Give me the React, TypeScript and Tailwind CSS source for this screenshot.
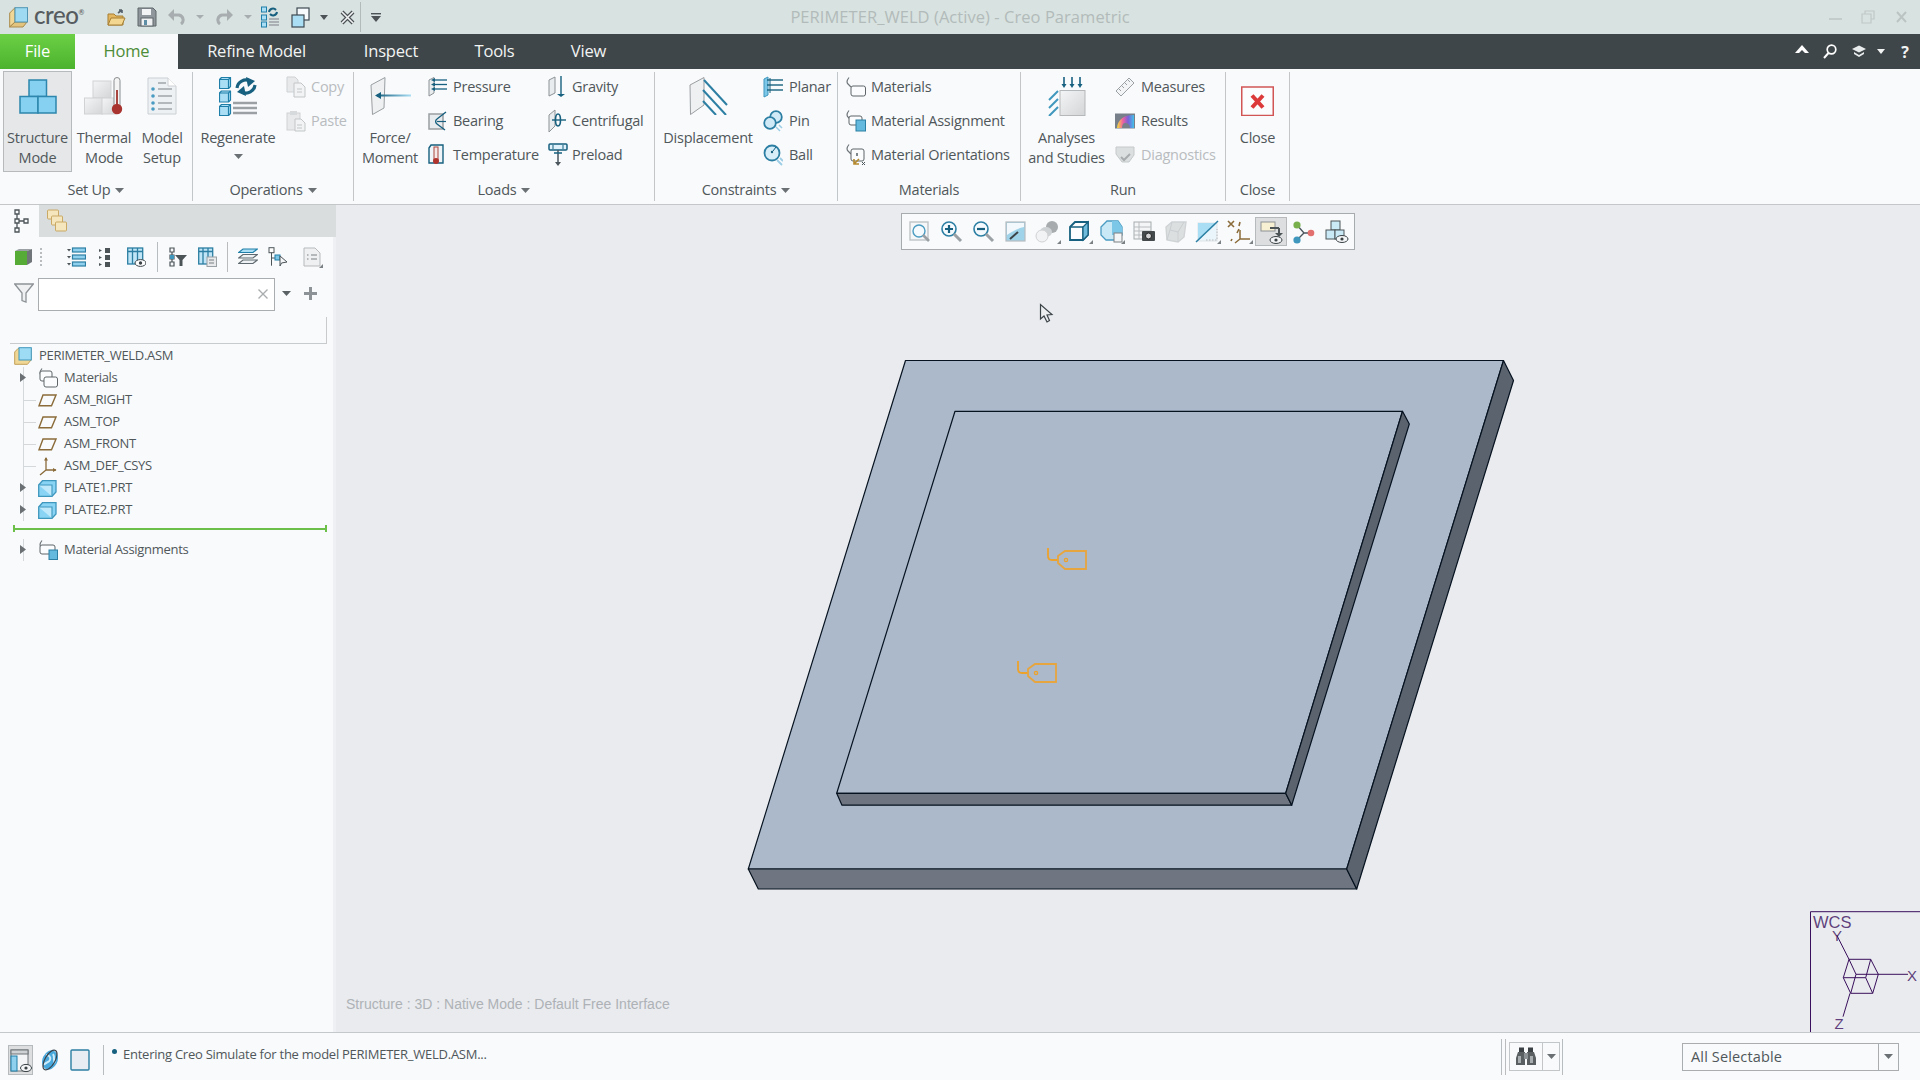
import React from "react";

const FONT = "font-['Open_Sans','Noto_Sans',sans-serif]";
const BL = "#1f7fa8";
const LB = "#a9def5";
const TEAL = "#17607f";
const GY = "#9ba0a4";

function S({ w, h, children, className = "" }: { w: number; h: number; children?: React.ReactNode; className?: string }) {
  return (
    <svg width={w} height={h} viewBox={`0 0 ${w} ${h}`} className={`block shrink-0 ${className}`}>
      {children}
    </svg>
  );
}

function Caret({ c = "#6a7073", w = 9, h = 5 }: { c?: string; w?: number; h?: number }) {
  return (
    <S w={w} h={h}>
      <polygon points={`0,0 ${w},0 ${w / 2},${h}`} fill={c} />
    </S>
  );
}

function MiniCube({ x, y, w, h, fill = LB, stroke = BL, sw = 1 }: { x: number; y: number; w: number; h: number; fill?: string; stroke?: string; sw?: number }) {
  const d = Math.round(w * 0.22);
  return (
    <g stroke={stroke} strokeWidth={sw} strokeLinejoin="round">
      <polygon points={`${x},${y + d} ${x + d},${y} ${x + w},${y} ${x + w},${y + h - d} ${x + w - d},${y + h} ${x},${y + h}`} fill={fill} />
      <polyline points={`${x},${y + d} ${x + w - d},${y + d} ${x + w - d},${y + h}`} fill="none" />
      <line x1={x + w - d} y1={y + d} x2={x + w} y2={y} />
    </g>
  );
}

/* ---------- title bar icons ---------- */
const CreoLogo = () => (
  <S w={20} h={21}>
    <polygon points="0.7,6 6,0.7 6,15 0.7,20" fill="#f0d795" stroke="#a98a4c" />
    <polygon points="0.7,20 6,15 18,15 14,20" fill="#e3c47f" stroke="#a98a4c" />
    <rect x="6" y="0.7" width="12.5" height="14.3" fill="#9fdaf3" stroke="#4f95b3" />
  </S>
);
const FolderIc = () => (
  <S w={20} h={20}>
    <path d="M2 7h6l2 2h7v9H2z" fill="#e4b65f" stroke="#a67f34" />
    <path d="M2 18l3-7h14l-3 7z" fill="#f3d690" stroke="#a67f34" />
    <path d="M12 6l4-3M16 3h-3M16 3v3" stroke="#55606a" strokeWidth="1.6" fill="none" />
  </S>
);
const SaveIc = () => (
  <S w={20} h={20}>
    <path d="M1 1h15l3 3v15H1z" fill="#8f979c" stroke="#5e666b" />
    <rect x="5" y="2" width="9" height="6" fill="#f1f3f4" />
    <rect x="4" y="11" width="12" height="8" fill="#eef0f2" stroke="#5e666b" />
    <rect x="7" y="13" width="3" height="5" fill="#5e8ea6" />
  </S>
);
const UndoIc = ({ flip = false }: { flip?: boolean }) => (
  <S w={20} h={16} className={flip ? "-scale-x-100" : ""}>
    <path d="M4 6h8a5 5 0 0 1 2 9" fill="none" stroke="#a8adb0" strokeWidth="3" />
    <polygon points="1,6 7,0 7,12" fill="#a8adb0" />
  </S>
);
const RegenMini = () => (
  <S w={18} h={22}>
    <rect x="0.5" y="1" width="5" height="5" fill={LB} stroke={BL} />
    <rect x="0.5" y="9" width="5" height="5" fill={LB} stroke={BL} />
    <rect x="0.5" y="16" width="5" height="5" fill={LB} stroke={BL} />
    <path d="M8 6a4 4 0 0 1 7-2" fill="none" stroke={TEAL} strokeWidth="2" />
    <path d="M16 6a4 4 0 0 1-7 2" fill="none" stroke={TEAL} strokeWidth="2" />
    <path d="M8 13h10M8 16h10M8 19h10" stroke={GY} strokeWidth="1.4" />
  </S>
);
const WinMini = () => (
  <S w={19} h={21}>
    <rect x="6" y="1" width="12" height="12" fill="#f7fafc" stroke="#3d4a52" strokeWidth="1.2" />
    <rect x="1" y="8" width="12" height="12" fill={LB} stroke="#3d4a52" strokeWidth="1.2" />
  </S>
);
const CloseWinMini = () => (
  <S w={15} h={15}>
    <path d="M2 2l11 11M13 2L2 13" stroke="#4d5256" strokeWidth="4" />
    <path d="M2 2l11 11M13 2L2 13" stroke="#f2f4f4" strokeWidth="1.6" />
  </S>
);

/* ---------- ribbon large icons ---------- */
const StructureIc = () => (
  <S w={38} h={35}>
    <g fill="#86d0f2" stroke="#2c86ad" strokeWidth="1.5">
      <rect x="10" y="1" width="17.5" height="16.5" />
      <rect x="1" y="17.5" width="18" height="16.5" />
      <rect x="19" y="17.5" width="18" height="16.5" />
    </g>
  </S>
);
const ThermalIc = () => (
  <S w={41} h={38}>
    <defs>
      <linearGradient id="gblock" x1="0" y1="0" x2="1" y2="1">
        <stop offset="0" stopColor="#f4f5f6" />
        <stop offset="1" stopColor="#d3d5d7" />
      </linearGradient>
    </defs>
    <g fill="url(#gblock)" stroke="#d0d2d4">
      <rect x="9" y="4" width="18" height="17" />
      <rect x="0.5" y="21" width="18" height="16" />
      <rect x="18" y="21" width="14" height="16" />
    </g>
    <rect x="30" y="0.5" width="6" height="30" rx="3" fill="#f4f4f4" stroke="#8a8d8f" />
    <rect x="32" y="13" width="2" height="18" fill="#a8453f" />
    <circle cx="33" cy="32" r="5.2" fill="#a8332f" />
  </S>
);
const SetupIc = () => (
  <S w={30} h={38}>
    <path d="M1 1h20l8 8v28H1z" fill="#eef1f4" stroke="#ccd0d4" />
    <path d="M21 1v8h8" fill="#fff" stroke="#ccd0d4" />
    {[12, 19, 26, 32].map((y) => (
      <g key={y}>
        <circle cx="6" cy={y} r="1.8" fill="#4b9cc2" />
        <line x1="11" y1={y} x2="25" y2={y} stroke="#9aa0a5" strokeWidth="1.4" />
      </g>
    ))}
    <path d="M11 6h8" stroke="#9aa0a5" strokeWidth="1.4" />
  </S>
);
const RegenIc = () => (
  <S w={38} h={39}>
    <MiniCube x={0.5} y={0.5} w={11} h={11} sw={1.2} />
    <MiniCube x={0.5} y={14} w={11} h={11} sw={1.2} />
    <MiniCube x={0.5} y={27.5} w={11} h={11} sw={1.2} />
    <path d="M18 11a9 9 0 0 1 13-7" fill="none" stroke={TEAL} strokeWidth="3.2" />
    <polygon points="27,0 36,4 29,10" fill={TEAL} />
    <path d="M36 8a9 9 0 0 1-13 7" fill="none" stroke={TEAL} strokeWidth="3.2" />
    <polygon points="27,19 18,15 25,9" fill={TEAL} />
    <path d="M14 26h24M14 31h24M14 36h24" stroke={GY} strokeWidth="2.6" />
  </S>
);
const ForceIc = () => (
  <S w={41} h={38}>
    <defs>
      <linearGradient id="garrow" x1="0" y1="0" x2="1" y2="0">
        <stop offset="0" stopColor="#17607f" />
        <stop offset="1" stopColor="#a9def5" />
      </linearGradient>
    </defs>
    <polygon points="1,8 15,0.5 14,31 2.5,37.5" fill="#eef0f1" stroke="#9a9ea1" />
    <rect x="7" y="17.5" width="34" height="2" fill="url(#garrow)" />
    <polygon points="5,18.5 11,15 11,22" fill={TEAL} />
  </S>
);
const DisplacementIc = () => (
  <S w={39} h={38}>
    <polygon points="1,8 15,0.5 15,28 1.5,37.5" fill="#eef0f1" stroke="#9a9ea1" />
    <g stroke="#2c7fa3" strokeWidth="2">
      <line x1="15" y1="3" x2="38" y2="28" />
      <line x1="14" y1="13" x2="37" y2="38" />
      <line x1="14" y1="24" x2="27" y2="38" />
    </g>
  </S>
);
const AnalysesIc = () => (
  <S w={38} h={40}>
    <rect x="12" y="14.5" width="25" height="25" fill="url(#gblock)" stroke="#b5b8ba" />
    <g stroke={TEAL} strokeWidth="1.6" fill={TEAL}>
      {[16, 24, 32].map((x) => (
        <g key={x}>
          <line x1={x} y1="1" x2={x} y2="9" />
          <polygon points={`${x - 2.5},8 ${x + 2.5},8 ${x},12`} stroke="none" />
        </g>
      ))}
    </g>
    <g stroke="#3f97bd" strokeWidth="2">
      <line x1="1" y1="24" x2="10" y2="15" />
      <line x1="1" y1="32" x2="10" y2="23" />
      <line x1="1" y1="40" x2="10" y2="31" />
    </g>
  </S>
);
const CloseIc = () => (
  <S w={33} h={40}>
    <rect x="0.75" y="11" width="31.5" height="28.5" fill="#fbfcfd" stroke="#d25555" strokeWidth="1.5" />
    <path d="M11 19.5l11 12M22 19.5l-11 12" stroke="#dc3a3a" strokeWidth="4" />
  </S>
);

/* ---------- ribbon small icons ---------- */
const CopyIc = () => (
  <S w={20} h={22}>
    <path d="M1 1h8l3 3v12H1z" fill="#e7e9eb" stroke="#cfd2d4" />
    <path d="M8 7h7l4 4v10H8z" fill="#f2f3f4" stroke="#c3c6c8" />
    <path d="M11 13h5M11 16h5" stroke="#c3c6c8" />
  </S>
);
const PasteIc = () => (
  <S w={20} h={22}>
    <rect x="1" y="3" width="13" height="17" fill="#e7e9eb" stroke="#cfd2d4" />
    <rect x="4" y="1" width="7" height="4" fill="#d7dadc" />
    <path d="M9 9h6l4 4v8H9z" fill="#f2f3f4" stroke="#c3c6c8" />
    <path d="M11 15h5M11 18h5" stroke="#c3c6c8" />
  </S>
);
const PanelBack = () => <polygon points="1,3 6,0.5 6,16 1,19" fill="#e9ecee" stroke="#8d9296" />;
const PressureIc = () => (
  <S w={20} h={20}>
    <PanelBack />
    {[3, 7.5, 12].map((y) => (
      <g key={y}>
        <line x1="5" y1={y} x2="19" y2={y} stroke={TEAL} strokeWidth="1.3" />
        <polygon points={`3,${y} 7,${y - 2} 7,${y + 2}`} fill={TEAL} />
      </g>
    ))}
  </S>
);
const BearingIc = () => (
  <S w={20} h={20}>
    <rect x="1" y="3" width="14" height="15" fill="#e9ecee" stroke="#9a9ea1" strokeWidth="1.5" />
    <path d="M18 1L9 8a3 3 0 0 0 0 5l8 6" fill="none" stroke={TEAL} strokeWidth="1.4" />
    <path d="M9 10.5h9" stroke={TEAL} strokeWidth="1.2" />
  </S>
);
const TempIc = () => (
  <S w={16} h={22}>
    <path d="M1 4l2-3h12v18H1z" fill="#eef4f7" stroke={TEAL} strokeWidth="1.4" />
    <rect x="6" y="3" width="4" height="13" fill="#f6e8e6" stroke="#a8453f" />
    <circle cx="8" cy="17" r="3" fill="#b0332e" />
  </S>
);
const GravityIc = () => (
  <S w={18} h={22}>
    <polygon points="1,4 7,1 7,17 1,20" fill="#e9ecee" stroke="#8d9296" />
    <line x1="13" y1="0" x2="13" y2="18" stroke={TEAL} strokeWidth="1.4" />
    <polygon points="9,18 17,18 13,21" fill={TEAL} />
  </S>
);
const CentrifugalIc = () => (
  <S w={18} h={24}>
    <polygon points="1,6 7,1 7,17 1,23" fill="#e9ecee" stroke="#8d9296" />
    <line x1="4" y1="11" x2="18" y2="11" stroke={TEAL} strokeWidth="1.4" />
    <ellipse cx="10" cy="11" rx="2.5" ry="6" fill="none" stroke={TEAL} strokeWidth="1.6" />
  </S>
);
const PreloadIc = () => (
  <S w={20} h={24}>
    <rect x="1" y="1" width="18" height="6" rx="1" fill="#dff1fa" stroke={TEAL} strokeWidth="1.5" />
    <path d="M5 2v4M15 2v4" stroke={TEAL} />
    <line x1="10" y1="7" x2="10" y2="20" stroke="#4a555c" strokeWidth="1.5" />
    <path d="M6 10h8" stroke={TEAL} strokeWidth="1.5" />
    <polygon points="7,19 13,19 10,23" fill="#4a555c" />
  </S>
);
const PlanarIc = () => (
  <S w={20} h={22}>
    <polygon points="1,3 5,1 5,19 1,21" fill="#7cc6e8" stroke="#3f97bd" />
    {[4, 9, 14].map((y) => (
      <line key={y} x1="4" y1={y} x2="20" y2={y} stroke={TEAL} strokeWidth="1.4" />
    ))}
    <line x1="7" y1="2" x2="7" y2="17" stroke={TEAL} strokeWidth="1" />
  </S>
);
const PinIc = () => (
  <S w={20} h={22}>
    <circle cx="13" cy="7" r="5.8" fill="#cfe9f6" stroke="#2c7fa3" strokeWidth="1.8" />
    <circle cx="7" cy="13" r="5.8" fill="#cfe9f6" stroke="#2c7fa3" strokeWidth="1.8" />
    <path d="M13 17l4 4M16 15l3 3" stroke="#9ccde4" strokeWidth="1.5" />
  </S>
);
const BallIc = () => (
  <S w={20} h={22}>
    <circle cx="9" cy="9" r="7.5" fill="#d7edf8" stroke="#2c7fa3" strokeWidth="1.8" />
    <circle cx="9" cy="8" r="1.2" fill={TEAL} />
    <path d="M13 3l-3 4" stroke={TEAL} />
    <path d="M14 16l5 5M17 14l3 3" stroke="#9ccde4" strokeWidth="1.8" />
  </S>
);
const MatBase = () => <path d="M4 0.5C2 3 1 5 3 7l3 3" fill="none" stroke="#6f7579" strokeWidth="1.2" />;
const MaterialsIc = () => (
  <S w={21} h={20}>
    <MatBase />
    <rect x="6" y="9" width="14.5" height="10" rx="2" fill="#fbfcfd" stroke="#5f6569" />
  </S>
);
const MatAssignIc = () => (
  <S w={21} h={22}>
    <MatBase />
    <rect x="4" y="6" width="13" height="9" rx="2" fill="#fbfcfd" stroke="#5f6569" />
    <rect x="11" y="10" width="9.5" height="11" fill="#63b9de" stroke="#2c7fa3" />
  </S>
);
const MatOrientIc = () => (
  <S w={21} h={22}>
    <MatBase />
    <rect x="6" y="5" width="13" height="12" rx="2" fill="#fbfcfd" stroke="#5f6569" />
    <path d="M12 9v3" stroke="#4a555c" strokeWidth="1.4" />
    <path d="M9 20l5-5M9 15v5h5" fill="none" stroke="#b58a2e" strokeWidth="1.6" />
    <path d="M17 18l3 3M20 18l-3 3" stroke="#4a555c" />
  </S>
);
const RulerIc = () => (
  <S w={20} h={20}>
    <polygon points="1,14 14,1 19,6 6,19" fill="#f3f4f5" stroke="#9ba0a4" />
    <path d="M4 12l2 2M7 9l2 2M10 6l2 2M13 3l2 2" stroke="#9ba0a4" />
  </S>
);
const ResultsIc = () => (
  <S w={20} h={16}>
    <defs>
      <linearGradient id="grain" x1="0" y1="0" x2="1" y2="0">
        <stop offset="0" stopColor="#f4e23a" />
        <stop offset="0.35" stopColor="#ef5fa0" />
        <stop offset="0.65" stopColor="#7a5fd8" />
        <stop offset="1" stopColor="#42c2e8" />
      </linearGradient>
    </defs>
    <rect x="0" y="0.5" width="20" height="15" fill="#77808a" />
    <path d="M2 15C3 6 9 2 19 2v13h-4c0-3-2-5-5-5-2 0-3 2-3 5z" fill="url(#grain)" />
  </S>
);
const DiagIc = () => (
  <S w={20} h={20}>
    <path d="M1 2h18v8l-5 7H7L1 9z" fill="#dcdfe0" stroke="#c6c9cb" />
    <path d="M6 12l3 3 6-6" fill="none" stroke="#a7abad" strokeWidth="2" />
  </S>
);

/* ---------- ribbon structure ---------- */
function Lg({ icon, lines, active = false, w, sub }: { icon: React.ReactNode; lines: string[]; active?: boolean; w: string; sub?: boolean }) {
  return (
    <div
      className={`${w} flex flex-col items-center shrink-0 ${
        active ? "h-[101px] -mt-px pt-[4px] bg-[#e5e7e9] border border-[#b7babc]" : "pt-[4px]"
      }`}
    >
      <div className="h-[40px] mb-[12px] flex items-center justify-center">{icon}</div>
      {lines.map((l) => (
        <div key={l} className="h-[20px] leading-[20px] whitespace-nowrap">
          {l}
        </div>
      ))}
      {sub && (
        <div className="h-[16px] flex items-center">
          <Caret />
        </div>
      )}
    </div>
  );
}

function Sm({ icon, label, off = false, iw = "w-[25px]" }: { icon: React.ReactNode; label: string; off?: boolean; iw?: string }) {
  return (
    <div className={`h-[30px] flex items-center whitespace-nowrap ${off ? "text-[#b8bcbf]" : ""}`}>
      <div className={`${iw} shrink-0`}>{icon}</div>
      <span>{label}</span>
    </div>
  );
}

function Col({ children, className = "" }: { children: React.ReactNode; className?: string }) {
  return <div className={`flex flex-col gap-[4px] shrink-0 ${className}`}>{children}</div>;
}

function Group({ w, title, caret = false, children, pad = "" }: { w: string; title: string; caret?: boolean; children: React.ReactNode; pad?: string }) {
  return (
    <div className={`${w} shrink-0 my-[3px] border-r border-[#c3c6c8] flex flex-col`}>
      <div className={`h-[104px] flex ${pad}`}>{children}</div>
      <div className="h-[25px] flex items-center justify-center gap-[5px] pt-[3px]">
        <span>{title}</span>
        {caret && <Caret />}
      </div>
    </div>
  );
}

function Ribbon() {
  return (
    <div className="h-[136px] shrink-0 bg-[#f8fafc] border-b border-[#c4c7c9] flex text-[#50575a] text-[14.5px] tracking-[-0.25px]">
      <Group w="w-[193px]" title="Set Up" caret pad="pl-[3px]">
        <Lg w="w-[69px]" active icon={<StructureIc />} lines={["Structure", "Mode"]} />
        <Lg w="w-[64px]" icon={<ThermalIc />} lines={["Thermal", "Mode"]} />
        <Lg w="w-[52px]" icon={<SetupIc />} lines={["Model", "Setup"]} />
      </Group>
      <Group w="w-[161px]" title="Operations" caret>
        <Lg w="w-[90px]" sub icon={<RegenIc />} lines={["Regenerate"]} />
        <Col className="ml-[3px]">
          <Sm off icon={<CopyIc />} label="Copy" />
          <Sm off icon={<PasteIc />} label="Paste" />
        </Col>
      </Group>
      <Group w="w-[301px]" title="Loads" caret>
        <Lg w="w-[72px]" icon={<ForceIc />} lines={["Force/", "Moment"]} />
        <Col className="ml-[2px] w-[120px]">
          <Sm icon={<PressureIc />} label="Pressure" />
          <Sm icon={<BearingIc />} label="Bearing" />
          <Sm icon={<TempIc />} label="Temperature" />
        </Col>
        <Col>
          <Sm iw="w-[24px]" icon={<GravityIc />} label="Gravity" />
          <Sm iw="w-[24px]" icon={<CentrifugalIc />} label="Centrifugal" />
          <Sm iw="w-[24px]" icon={<PreloadIc />} label="Preload" />
        </Col>
      </Group>
      <Group w="w-[183px]" title="Constraints" caret>
        <Lg w="w-[106px]" icon={<DisplacementIc />} lines={["Displacement"]} />
        <Col className="ml-[2px]">
          <Sm iw="w-[26px]" icon={<PlanarIc />} label="Planar" />
          <Sm iw="w-[26px]" icon={<PinIc />} label="Pin" />
          <Sm iw="w-[26px]" icon={<BallIc />} label="Ball" />
        </Col>
      </Group>
      <Group w="w-[183px]" title="Materials" pad="pl-[7px]">
        <Col>
          <Sm iw="w-[26px]" icon={<MaterialsIc />} label="Materials" />
          <Sm iw="w-[26px]" icon={<MatAssignIc />} label="Material Assignment" />
          <Sm iw="w-[26px]" icon={<MatOrientIc />} label="Material Orientations" />
        </Col>
      </Group>
      <Group w="w-[205px]" title="Run">
        <Lg w="w-[91px]" icon={<AnalysesIc />} lines={["Analyses", "and Studies"]} />
        <Col className="ml-[3px]">
          <Sm iw="w-[26px]" icon={<RulerIc />} label="Measures" />
          <Sm iw="w-[26px]" icon={<ResultsIc />} label="Results" />
          <Sm iw="w-[26px]" off icon={<DiagIc />} label="Diagnostics" />
        </Col>
      </Group>
      <Group w="w-[64px]" title="Close">
        <Lg w="w-[63px]" icon={<CloseIc />} lines={["Close"]} />
      </Group>
    </div>
  );
}

/* ---------- panel icons ---------- */
const TreeGlyph = () => (
  <S w={15} h={24}>
    <path d="M1 1h4v4H1zM1 10h4v4H1zM1 19h4v4H1zM10 10h4v4h-4zM3 5v5M3 14v5M5 12h5" fill="none" stroke="#4c5458" strokeWidth="1.3" />
  </S>
);
const LayersFolder = () => (
  <S w={20} h={26}>
    <g fill="#f6e6bd" stroke="#c9a964">
      <rect x="0.5" y="2" width="11" height="9" rx="1" />
      <rect x="4.5" y="8" width="11" height="9" rx="1" />
      <rect x="8.5" y="14" width="11" height="9" rx="1" />
    </g>
  </S>
);
const StackBars = () => (
  <S w={19} h={20}>
    <g fill="#8fd0ee" stroke="#2c7fa3" strokeWidth="1.2">
      <rect x="5.5" y="1" width="13" height="4" />
      <rect x="5.5" y="8" width="13" height="4" />
      <rect x="5.5" y="15" width="13" height="4" />
    </g>
    <g fill="#4c5458">
      <polygon points="0,2 4,2 2,4.5" />
      <polygon points="0,9 4,9 2,11.5" />
      <polygon points="0,16 4,16 2,18.5" />
    </g>
  </S>
);
const Dots3 = () => (
  <S w={12} h={20}>
    {[2, 9, 16].map((y) => (
      <g key={y}>
        <polygon points={`0,${y} 3,${y + 1.5} 0,${y + 3}`} fill="#4c5458" />
        <rect x="6" y={y - 1} width="5" height="5" fill="#4c5458" />
      </g>
    ))}
  </S>
);
const TableEye = () => (
  <S w={19} h={20}>
    <rect x="0.7" y="1" width="15" height="16" fill="#bfe5f6" stroke="#2c7fa3" strokeWidth="1.3" />
    <path d="M0.7 4.5h15M5.5 1v16M10.5 1v16" stroke="#2c7fa3" strokeWidth="1.3" />
    <ellipse cx="13.5" cy="16" rx="5.5" ry="3.4" fill="#fff" stroke="#3b4347" />
    <circle cx="13.5" cy="16" r="1.7" fill="#3b4347" />
  </S>
);
const TreeFilter = () => (
  <S w={19} h={20}>
    <path d="M2 1h4v4H2zM2 8h4v4H2zM2 15h4v4H2zM4 5v3M4 12v3" fill="none" stroke="#4c5458" strokeWidth="1.2" />
    <rect x="2" y="8" width="4" height="4" fill="#3f97bd" />
    <polygon points="7,8 19,8 14.5,13 14.5,19 11.5,19 11.5,13" fill="#4c5458" />
  </S>
);
const TableDoc = () => (
  <S w={19} h={20}>
    <rect x="0.7" y="1" width="14" height="16" fill="#bfe5f6" stroke="#2c7fa3" strokeWidth="1.3" />
    <path d="M0.7 4.5h14M5 1v16M10 1v16" stroke="#2c7fa3" strokeWidth="1.3" />
    <rect x="9" y="10" width="9.5" height="9.5" fill="#e7e9eb" stroke="#9ba0a4" />
    <path d="M11 13h5M11 16h5" stroke="#7b8084" />
  </S>
);
const Layers = () => (
  <S w={20} h={20}>
    {[1, 6.5, 12].map((y, i) => (
      <polygon key={y} points={`0.7,${y + 3.5} 5,${y} 19.3,${y} 15,${y + 3.5}`} transform="translate(0 1)" fill={i === 0 ? "#a9def5" : "#eef2f4"} stroke={i === 0 ? BL : "#5f6a70"} strokeWidth="1.1" />
    ))}
  </S>
);
const TreeSelect = () => (
  <S w={20} h={20}>
    <rect x="1" y="0.7" width="5" height="5" fill="#fff" stroke="#4c5458" />
    <path d="M3.5 5.7v13M3.5 11h4" stroke="#4c5458" />
    <rect x="7" y="8" width="5" height="5" fill="#7cc6e8" stroke={BL} />
    <polygon points="12,9 19,15 13.5,16 12,19" fill="#f5f6f7" stroke="#4c5458" />
  </S>
);
const DocList = () => (
  <S w={20} h={21}>
    <path d="M1 1h11l5 5v13H1z" fill="#eef0f2" stroke="#b7babc" />
    <path d="M4 8h1.5M8 8h6M4 12h1.5M8 12h6" stroke="#7b8084" />
    <polygon points="20,17 20,21 16,21" fill="#7b8084" />
  </S>
);
const CubeGreen = () => (
  <S w={17} h={16}>
    <rect x="0" y="2" width="12" height="14" fill="#55ab35" />
    <polygon points="0,2 4,0 17,0 12,2" fill="#9ba0a4" />
    <polygon points="12,2 17,0 17,13 12,16" fill="#6f7579" />
  </S>
);
const PlaneIc = () => (
  <S w={19} h={13}>
    <polygon points="1,11.8 5,1 18,1 13.5,11.8" fill="#f9fafb" stroke="#8a6b39" strokeWidth="1.4" />
  </S>
);
const CsysIc = () => (
  <S w={19} h={19}>
    <path d="M8 1v12M8 13h10M8 13l-6 5" fill="none" stroke="#8a6b39" strokeWidth="1.3" />
    <polygon points="18.5,13 15,11 15,15" fill="#8a6b39" />
    <polygon points="8,0 6,3.5 10,3.5" fill="#8a6b39" />
  </S>
);
const PartIc = () => (
  <S w={19} h={17}>
    <polygon points="0.7,5 4.5,0.7 18,0.7 18,12 14,16.3 0.7,16.3" fill="#89d4f5" stroke="#3f97bd" strokeWidth="1.3" />
    <polyline points="0.7,5 14,5 14,16.3" fill="#bfe9fb" stroke="#3f97bd" strokeWidth="1.1" />
  </S>
);
const AsmIc = () => (
  <S w={18} h={18}>
    <polygon points="0.7,5 4,1.5 17,1.5 17,13 13.5,17.3 0.7,17.3" fill="#f0d795" stroke="#c2a058" />
    <rect x="5" y="0.7" width="12.3" height="12.3" fill="#9edcf6" stroke="#3f97bd" />
  </S>
);
const MatTree = () => (
  <S w={20} h={20}>
    <MatBase />
    <rect x="2" y="3" width="12" height="10" rx="2" fill="#fbfcfd" stroke="#5f6569" />
    <rect x="6" y="9" width="13.5" height="10" rx="2" fill="#fbfcfd" stroke="#5f6569" />
  </S>
);
const MatTree2 = () => (
  <S w={20} h={20}>
    <MatBase />
    <rect x="2" y="5" width="15" height="9" rx="2" fill="#fbfcfd" stroke="#5f6569" />
    <rect x="11" y="10" width="8.5" height="9.5" fill="#63b9de" stroke="#2c7fa3" />
  </S>
);
const ArrowR = () => (
  <S w={6} h={9}>
    <polygon points="0,0 6,4.5 0,9" fill="#6a7073" />
  </S>
);

function Row({ icon, label, caret = false }: { icon: React.ReactNode; label: string; caret?: boolean }) {
  return (
    <div className="h-[22px] flex items-center relative">
      <div className="w-[38px] pl-[23px] h-full shrink-0 flex items-center">
        <div className="h-full border-l border-[#d5d8da] flex items-center">{!caret && <div className="w-[12px] h-px bg-[#d5d8da]" />}</div>
      </div>
      {caret && (
        <div className="absolute left-[20px] top-[6px]">
          <ArrowR />
        </div>
      )}
      <div className="w-[26px] shrink-0 flex items-center">{icon}</div>
      <span>{label}</span>
    </div>
  );
}

function Sidebar() {
  return (
    <aside className="w-[336px] shrink-0 bg-[#f8fafc] border-r-[3px] border-[#eef0f3] flex flex-col text-[13px] tracking-[-0.3px] text-[#50575a]">
      <div className="h-[32px] bg-[#d9dddd] flex -mr-[3px]">
        <div className="w-[39px] bg-[#f8fafc] flex items-center pl-[14px]">
          <TreeGlyph />
        </div>
        <div className="ml-[8px] flex items-center">
          <LayersFolder />
        </div>
      </div>
      <div className="h-[40px] flex items-center pl-[15px]">
        <CubeGreen />
        <div className="ml-[8px] w-[2px] h-[18px] border-l-2 border-dotted border-[#b8bcbf]" />
        <div className="ml-[25px]"><StackBars /></div>
        <div className="ml-[13px]"><Dots3 /></div>
        <div className="ml-[16px]"><TableEye /></div>
        <div className="ml-[11px] w-px h-[30px] bg-[#b8bcbf]" />
        <div className="ml-[10px]"><TreeFilter /></div>
        <div className="ml-[11px]"><TableDoc /></div>
        <div className="ml-[10px] w-px h-[30px] bg-[#b8bcbf]" />
        <div className="ml-[10px]"><Layers /></div>
        <div className="ml-[10px]"><TreeSelect /></div>
        <div className="ml-[15px]"><DocList /></div>
      </div>
      <div className="h-[34px] flex items-center pl-[14px]">
        <div className="-mt-[2px]">
          <S w={20} h={20}>
            <polygon points="0.7,1 19.3,1 12,10 12,19 8,17.5 8,10" fill="#eef0f2" stroke="#8d9296" strokeWidth="1.3" />
          </S>
        </div>
        <div className="ml-[4px] w-[237px] h-[33px] bg-white border border-[#a9adaf] flex items-center justify-end pr-[5px]">
          <div className="-mt-[1px]">
            <S w={12} h={12}>
              <path d="M1.5 1.5l9 9M10.5 1.5l-9 9" stroke="#a9adaf" strokeWidth="1.4" />
            </S>
          </div>
        </div>
        <div className="ml-[7px] -mt-[2px]"><Caret c="#5b6265" w={9} h={5} /></div>
        <div className="ml-[12px] -mt-[2px]">
          <S w={15} h={15}>
            <path d="M7.5 1v13M1 7.5h13" stroke="#8d9296" strokeWidth="3" />
          </S>
        </div>
      </div>
      <div className="h-[27px] mt-[6px] ml-[10px] w-[317px] border-b border-r border-[#c8cbcd]" />
      <div className="flex flex-col">
        <div className="h-[22px] flex items-center pl-[14px] mt-px">
          <div className="w-[25px] shrink-0"><AsmIc /></div>
          <span>PERIMETER_WELD.ASM</span>
        </div>
        <Row caret icon={<MatTree />} label="Materials" />
        <Row icon={<PlaneIc />} label="ASM_RIGHT" />
        <Row icon={<PlaneIc />} label="ASM_TOP" />
        <Row icon={<PlaneIc />} label="ASM_FRONT" />
        <Row icon={<CsysIc />} label="ASM_DEF_CSYS" />
        <Row caret icon={<PartIc />} label="PLATE1.PRT" />
        <Row caret icon={<PartIc />} label="PLATE2.PRT" />
        <div className="h-[7px] mt-[4px] ml-[13px] w-[314px] border-x-2 border-[#6cc04a] flex items-center">
          <div className="h-[2px] w-full bg-[#6cc04a]" />
        </div>
        <div className="mt-[7px]">
          <Row caret icon={<MatTree2 />} label="Material Assignments" />
        </div>
      </div>
    </aside>
  );
}

/* ---------- floating toolbar ---------- */
function Corner() {
  return <polygon points="27,21 27,25 23,25" fill="#7b8084" />;
}
const lens = (extra: React.ReactNode) => (
  <>
    <circle cx="11" cy="10" r="7" fill="#f4fafd" stroke="#2c7fa3" strokeWidth="1.6" />
    {extra}
    <path d="M16 15l7 7" stroke="#9ba0a4" strokeWidth="3" />
  </>
);
const tools: React.ReactNode[] = [
  <>
    <rect x="4" y="3" width="18" height="18" fill="#f6f7f8" stroke="#c1c4c6" strokeWidth="1.4" />
    <circle cx="13" cy="12" r="6" fill="#f4fafd" stroke="#4b9cc2" strokeWidth="1.4" />
    <path d="M17 16l6 6" stroke="#9ba0a4" strokeWidth="2.6" />
  </>,
  lens(<path d="M7 10h8M11 6v8" stroke={TEAL} strokeWidth="2.2" />),
  lens(<path d="M7 10h8" stroke={TEAL} strokeWidth="2.2" />),
  <>
    <rect x="4" y="3" width="19" height="19" fill="#9fd3ea" stroke="#b8bcbf" strokeWidth="1.2" />
    <path d="M5 4h17v4c-6 1-12 5-17 8z" fill="#f2f8fb" />
    <path d="M8 20l8-7" stroke="#3b4347" strokeWidth="2" />
  </>,
  <>
    <circle cx="18" cy="8" r="6" fill="#a7abad" />
    <ellipse cx="12" cy="13" rx="6" ry="5" fill="#cfd2d4" />
    <circle cx="8" cy="17" r="6" fill="#f2f3f4" stroke="#d0d2d4" />
    <Corner />
  </>,
  <>
    <polygon points="4,8 9,3 22,3 22,16 17,21 4,21" fill="#fbfdfe" stroke={TEAL} strokeWidth="1.8" />
    <polyline points="4,8 17,8 17,21" fill="none" stroke={TEAL} strokeWidth="1.5" />
    <polygon points="17,8 22,3 22,16 17,21" fill="#6fbbdc" stroke={TEAL} strokeWidth="1.2" />
    <Corner />
  </>,
  <>
    <polygon points="3,8 9,2 20,2 24,8 24,16 20,21 8,21 3,16" fill="#c9e9f7" stroke="#4b9cc2" strokeWidth="1.3" />
    <polygon points="14,2 20,2 24,8 24,16 14,16" fill="#7cc6e8" />
    <rect x="16" y="14" width="8" height="9" fill="#f4f5f6" stroke="#7b8084" />
    <Corner />
  </>,
  <>
    <rect x="4" y="3" width="17" height="17" fill="#f4f5f6" stroke="#a7abad" />
    <path d="M4 8h17M4 12h17M4 16h17M9 3v17" stroke="#b8bcbf" />
    <rect x="12" y="12" width="13" height="10" rx="1" fill="#44494c" />
    <circle cx="18.5" cy="17" r="3" fill="#d0d2d4" stroke="#222" />
  </>,
  <>
    <polygon points="4,8 10,3 24,3 22,18 16,23 5,21" fill="#dcdfe0" stroke="#d0d3d5" strokeWidth="1.4" />
    <path d="M10 3l-2 8 8 2 6-10M8 11l-3 10M16 13v10" stroke="#cbced0" fill="none" />
  </>,
  <>
    <rect x="4" y="4" width="19" height="18" fill="#e9f5fb" stroke="#e0e3e5" />
    <polygon points="4,4 23,4 4,22" fill="#a9def5" />
    <path d="M2 23L24 2" stroke="#2c7fa3" strokeWidth="1.5" />
    <path d="M12 21h11v-11" stroke="#b8bcbf" strokeDasharray="1.5 1.5" fill="none" />
    <Corner />
  </>,
  <>
    <path d="M2 2l6 6M8 2l-6 6" stroke="#8a6b39" strokeWidth="1.6" />
    <path d="M14 3l-1 4M13 10l-2 4M6 20l-1 2" stroke="#8a6b39" strokeWidth="1.6" />
    <path d="M14 11v9h10M14 20l-5 4" stroke="#8a6b39" strokeWidth="1.5" fill="none" />
    <Corner />
  </>,
  <>
    <rect x="3" y="3" width="14" height="9" fill="#f8f0d2" stroke="#8d9296" />
    <path d="M12 9h9M21 9v6" stroke="#4c5458" strokeWidth="2" />
    <polygon points="17,14 25,14 21,18" fill="#4c5458" />
    <ellipse cx="18" cy="21" rx="6" ry="3.5" fill="#f4f5f6" stroke="#3b4347" />
    <circle cx="18" cy="21" r="1.6" fill="#3b4347" />
  </>,
  <>
    <path d="M7 6l7 8M7 21l7-7h8" stroke="#4a555c" strokeWidth="1.3" fill="none" />
    <circle cx="7" cy="6" r="3.6" fill="#78b04e" />
    <circle cx="7" cy="21" r="3.6" fill="#3f97bd" />
    <circle cx="21" cy="14" r="3.3" fill="#e2706e" />
  </>,
  <>
    <g fill="#c9e9f7" stroke="#4c5458" strokeWidth="1">
      <rect x="9" y="2" width="9" height="9" />
      <rect x="4" y="11" width="9" height="9" />
      <rect x="13" y="11" width="9" height="9" />
    </g>
    <ellipse cx="20" cy="20" rx="6" ry="3.5" fill="#f4f5f6" stroke="#3b4347" />
    <circle cx="20" cy="20" r="1.6" fill="#3b4347" />
  </>,
];

function FloatBar() {
  return (
    <div className="absolute left-[565px] top-[8px] h-[37px] w-[454px] bg-[#f8fafc] border border-[#a7abad] flex items-center pl-[1px]">
      {tools.map((t, i) => (
        <div
          key={i}
          className={`w-[32px] h-[29px] flex items-center justify-center shrink-0 ${
            i === 11 ? "bg-[#dcdee0] border border-[#b7babc]" : ""
          }`}
        >
          <S w={27} h={25}>{t}</S>
        </div>
      ))}
    </div>
  );
}

/* ---------- 3D scene ---------- */
function Tag({ dx, dy }: { dx: number; dy: number }) {
  return (
    <g transform={`translate(${dx} ${dy})`} fill="none" stroke="#eda22c" strokeWidth="1.8">
      <path d="M1048 548v8q0 4 4 4h6" />
      <path d="M1086 552v17h-21l-7-6v-7l7-5h21z" stroke="#e7a53f" />
      <circle cx="1066" cy="560" r="1.6" strokeWidth="1.4" />
    </g>
  );
}

function Scene() {
  const edge = "#06121f";
  return (
    <svg className="absolute left-0 top-0 block" width={1584} height={827} viewBox="336 205 1584 827">
      <g stroke={edge} strokeWidth="1.2" strokeLinejoin="round">
        <polygon points="905.5,360.5 1503.5,360.5 1346.7,869 748.3,869" fill="#abb9cb" />
        <polygon points="748.3,869 1346.7,869 1356.7,889 758.3,889" fill="#6f7682" />
        <polygon points="1503.5,360.5 1513.5,380.5 1356.7,889 1346.7,869" fill="#5b636f" />
        <polygon points="955,411.3 1402.5,411.3 1285.7,793.3 836.7,793.3" fill="#abb9cb" />
        <polygon points="836.7,793.3 1285.7,793.3 1291.7,805.2 842,805.2" fill="#6f7682" />
        <polygon points="1402.5,411.3 1409.3,424 1291.7,805.2 1285.7,793.3" fill="#5b636f" />
      </g>
      <Tag dx={0} dy={0} />
      <Tag dx={-30} dy={113} />
      <polygon points="1040.5,304.5 1040.5,319 1044,316 1047,322 1049.5,320.5 1047,315 1052,314.5" fill="#eceef0" stroke="#3b4347" strokeWidth="1.2" />
      <g stroke="#3a0f5c" strokeWidth="1" fill="none">
        <path d="M1920 911.7H1810.5V1032" />
        <path d="M1836.7 935L1849 959.3M1878 974.3H1908M1850 993.3L1843 1016.7" />
        <path d="M1849 959.3H1870.7L1878.3 974.3L1872.7 993.3H1850.7L1843.3 977.7Z" />
        <path d="M1849 959.3L1856 974.3H1878.3M1856 974.3L1850.7 993.3M1870.7 959.3L1865.7 977.7H1843.3M1865.7 977.7L1872.7 993.3" />
      </g>
      <g fill="#3a0f5c" fillOpacity="0.8" fontFamily="'Liberation Sans',sans-serif">
        <text x="1813" y="927.5" fontSize="16.5">WCS</text>
        <text x="1832" y="941" fontSize="15">Y</text>
        <text x="1907" y="981" fontSize="15">X</text>
        <text x="1834.5" y="1029" fontSize="15">Z</text>
      </g>
    </svg>
  );
}

/* ---------- status icons ---------- */
const LayoutIc = () => (
  <S w={23} h={26}>
    <rect x="2" y="3" width="17" height="21" fill="#f4f5f6" stroke="#6f7579" />
    <rect x="2" y="3" width="17" height="4" fill="#cfd2d4" stroke="#6f7579" />
    <rect x="2" y="9" width="6" height="15" fill="#8fd0ee" stroke={BL} />
    <ellipse cx="17" cy="21" rx="5.5" ry="3.6" fill="#f4f5f6" stroke="#3b4347" />
    <circle cx="17" cy="21" r="1.6" fill="#3b4347" />
  </S>
);
const GlobeIc = () => (
  <S w={20} h={24}>
    <ellipse cx="10" cy="12" rx="7.5" ry="10" transform="rotate(25 10 12)" fill="#4aa9dc" />
    <path d="M6 7c3 0 5 2 4 5s-5 2-6 5M13 6c2 3 0 7 2 9" stroke="#cdeaf8" strokeWidth="2" fill="none" />
    <ellipse cx="10" cy="12" rx="11" ry="5" transform="rotate(-60 10 12)" fill="none" stroke="#39424a" strokeWidth="1.2" />
  </S>
);
const PaneIc = () => (
  <S w={20} h={22}>
    <rect x="1" y="1" width="18" height="20" rx="1" fill="#e7edf2" stroke="#2c7fa3" strokeWidth="1.4" />
  </S>
);
const Binoculars = () => (
  <S w={20} h={19}>
    <g fill="#5a5f62">
      <rect x="3" y="0.5" width="5" height="5" fill="#3b4044" />
      <rect x="12" y="0.5" width="5" height="5" fill="#3b4044" />
      <path d="M2 5h7v13H0V11z" />
      <path d="M11 5h7l2 6v7h-9z" />
    </g>
    <rect x="8" y="6" width="4" height="6" fill="#8d9296" />
    <path d="M2 9h3v7H2zM14 9h3v7h-3z" fill="#a8adb0" />
  </S>
);

function StatusBar() {
  return (
    <div className="h-[48px] shrink-0 bg-[#f8fafc] border-t border-[#c5c8cb] flex items-center text-[#50575a] text-[13px] tracking-[-0.25px]">
      <div className="ml-[8px] mt-[6px] w-[25px] h-[30px] bg-[#dcdee0] border border-[#b7babc] flex items-center justify-center">
        <LayoutIc />
      </div>
      <div className="ml-[7px] mt-[6px]"><GlobeIc /></div>
      <div className="ml-[10px] mt-[6px]"><PaneIc /></div>
      <div className="ml-[13px] mt-[6px] w-px h-[30px] bg-[#b8bcbf]" />
      <div className="ml-[8px] w-[5px] h-[5px] rounded-full bg-[#17607f] -mt-[10px]" />
      <div className="ml-[6px] -mt-[4px] whitespace-nowrap">Entering Creo Simulate for the model PERIMETER_WELD.ASM...</div>
      <div className="flex-1" />
      <div className="h-[36px] w-px bg-[#b8bcbf]" />
      <div className="ml-[3px] h-[36px] w-px bg-[#b8bcbf]" />
      <div className="ml-[3px] w-[51px] h-[29px] border border-[#c3c6c8] flex items-center">
        <div className="w-[33px] h-full border-r border-[#c3c6c8] flex items-center justify-center">
          <Binoculars />
        </div>
        <div className="flex-1 flex justify-center"><Caret /></div>
      </div>
      <div className="ml-[2px] h-[36px] w-px bg-[#b8bcbf]" />
      <div className="ml-[119px] w-[217px] h-[28px] border border-[#a9adaf] flex items-center text-[14.5px] tracking-[0.15px] mr-[21px]">
        <div className="flex-1 pl-[8px]">All Selectable</div>
        <div className="w-[20px] h-full border-l border-[#a9adaf] flex items-center justify-center"><Caret /></div>
      </div>
    </div>
  );
}

export default function App() {
  return (
    <div className={`w-[1920px] h-[1080px] flex flex-col overflow-hidden bg-[#f8fafc] ${FONT}`}>
      <div className="h-[34px] shrink-0 bg-[#d8e2e0] flex items-center">
        <div className="w-[400px] flex items-center shrink-0">
          <div className="ml-[9px]"><CreoLogo /></div>
          <div className="ml-[5px] text-[24px] leading-none text-[#565c5f] tracking-[-0.4px] w-[52px] -mt-[4px] font-['Lato',sans-serif] font-medium whitespace-nowrap">creo<span className="text-[7px] align-super">®</span></div>
          <div className="ml-[20px]"><FolderIc /></div>
          <div className="ml-[11px]"><SaveIc /></div>
          <div className="ml-[10px]"><UndoIc /></div>
          <div className="ml-[9px]"><Caret c="#a8adb0" w={8} h={4} /></div>
          <div className="ml-[10px]"><UndoIc flip /></div>
          <div className="ml-[10px]"><Caret c="#a8adb0" w={8} h={4} /></div>
          <div className="ml-[9px]"><RegenMini /></div>
          <div className="ml-[12px]"><WinMini /></div>
          <div className="ml-[10px]"><Caret c="#4d5256" w={8} h={5} /></div>
          <div className="ml-[12px]"><CloseWinMini /></div>
          <div className="ml-[5px] w-px h-[30px] bg-[#b3bbba]" />
          <div className="ml-[10px]">
            <S w={10} h={9}>
              <rect x="0" y="0" width="10" height="1.4" fill="#4d5256" />
              <polygon points="0,3 10,3 5,9" fill="#4d5256" />
            </S>
          </div>
        </div>
        <div className="flex-1 text-center text-[16.5px] tracking-[0.05px] text-[#b2bbba] whitespace-nowrap">PERIMETER_WELD (Active) - Creo Parametric</div>
        <div className="w-[400px] shrink-0 flex items-center justify-end">
          <div className="w-[13px] h-[2px] bg-[#c4cccb] mt-[3px]" />
          <div className="ml-[19px]">
            <S w={14} h={14}>
              <path d="M4 4V1h9v8h-3M1 4h9v9H1z" fill="none" stroke="#c0c8c7" strokeWidth="1.2" />
            </S>
          </div>
          <div className="ml-[21px] mr-[13px]">
            <S w={11} h={12}>
              <path d="M1 1l9 10M10 1L1 11" stroke="#bcc4c3" strokeWidth="2" />
            </S>
          </div>
        </div>
      </div>

      <div className="h-[35px] shrink-0 bg-[#3f4649] flex items-center text-[16.5px] tracking-[-0.2px] text-[#f2f4f4]">
        <div className="w-[75px] h-full bg-gradient-to-b from-[#6bd044] to-[#4cb32e] flex items-center justify-center text-white">File</div>
        <div className="w-[103px] h-full bg-[#f8fafc] flex items-center justify-center text-[#4d8c38]">Home</div>
        <div className="w-[157px] text-center">Refine Model</div>
        <div className="w-[112px] text-center">Inspect</div>
        <div className="w-[95px] text-center">Tools</div>
        <div className="w-[93px] text-center">View</div>
        <div className="flex-1" />
        <div className="flex items-center">
          <S w={14} h={8} className="-mt-[6px]">
            <polygon points="0,8 7,0 14,8 10,8 7,5 4,8" fill="#fff" />
          </S>
          <div className="ml-[14px]">
            <S w={14} h={15}>
              <circle cx="8.5" cy="5.5" r="4.3" fill="none" stroke="#fff" strokeWidth="1.7" />
              <path d="M5.5 9L1 14" stroke="#fff" strokeWidth="2" />
            </S>
          </div>
          <div className="ml-[14px]">
            <S w={16} h={14}>
              <polygon points="1,4 8,0.5 15,4 8,7.5" fill="#e8ecec" />
              <path d="M3 7v2l5 3 5-3V7l-5 3z" fill="#e8ecec" />
            </S>
          </div>
          <div className="ml-[10px]"><Caret c="#f2f4f4" w={8} h={5} /></div>
          <div className="ml-[15px] mr-[10px] w-[10px] text-center text-[16px] font-bold leading-none">?</div>
        </div>
      </div>

      <Ribbon />

      <div className="flex-1 flex min-h-0">
        <Sidebar />
        <main className="flex-1 relative bg-[#e9ebef] overflow-hidden">
          <Scene />
          <FloatBar />
          <div className="absolute left-[10px] top-[791px] text-[14px] text-[#aeb2b6] font-['Liberation_Sans',sans-serif] whitespace-nowrap leading-4">
            Structure : 3D : Native Mode : Default Free Interface
          </div>
        </main>
      </div>

      <StatusBar />
    </div>
  );
}
